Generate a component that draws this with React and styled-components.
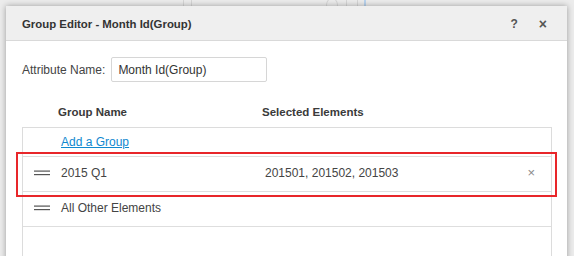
import React from 'react';
import styled, { createGlobalStyle } from 'styled-components';

const GlobalStyle = createGlobalStyle`
  html, body {
    margin: 0;
    padding: 0;
    background: #ececec;
    font-family: "Liberation Sans", Arial, sans-serif;
    font-size: 12px;
    color: #333;
  }
`;

const Screen = styled.div`
  position: relative;
  width: 574px;
  height: 256px;
  overflow: hidden;
  background: #ececec;
`;

const PageBehind = styled.div`
  display: flex;
  align-items: flex-end;
  height: 6px;
  padding-left: 183px;
`;

const FaintBox = styled.div`
  flex-shrink: 0;
  width: ${(p) => p.w}px;
  height: 12px;
  margin-left: ${(p) => p.ml || 0}px;
  border: 1px solid ${(p) => p.color || '#d6d6d6'};
  border-radius: ${(p) => (p.round ? '50%' : '0')};
  margin-bottom: -6px;
`;

const Dialog = styled.div`
  position: absolute;
  top: 6px;
  left: 6px;
  width: 561px;
  height: 270px;
  background: #fff;
  box-shadow: 0 0 6px rgba(0, 0, 0, 0.35);
`;

const Header = styled.div`
  display: flex;
  align-items: center;
  box-sizing: border-box;
  height: 35px;
  padding: 1px 20px 0 16px;
  background: #efefef;
  border-bottom: 1px solid #d9d9d9;
`;

const Title = styled.div`
  flex: 1;
  font-weight: bold;
  font-size: 11.4px;
  color: #333;
`;

const HeaderButton = styled.span`
  font-weight: bold;
  font-size: ${(p) => p.size || 12}px;
  color: #555;
  margin-left: ${(p) => p.gap || 0}px;
  line-height: 1;
`;

const Body = styled.div`
  padding: 16px 15px 0 16px;
`;

const FieldRow = styled.div`
  display: flex;
  align-items: center;
  gap: 6px;
`;

const Label = styled.label`
  color: #444;
`;

const TextInput = styled.div`
  box-sizing: border-box;
  width: 156px;
  height: 25px;
  border: 1px solid #d6d6d6;
  border-radius: 2px;
  padding: 0 6px;
  display: flex;
  align-items: center;
  font-size: 12px;
  color: #333;
`;

const ColumnHeads = styled.div`
  display: flex;
  height: 45px;
  align-items: center;
  padding-top: 14px;
  box-sizing: border-box;
  font-weight: bold;
  font-size: 11.5px;
  color: #3a3a3a;
`;

const Col = styled.div`
  box-sizing: border-box;
  width: ${(p) => p.w}px;
  padding-left: ${(p) => p.pl || 0}px;
`;

const List = styled.div`
  border: 1px solid #dcdcdc;
  height: 200px;
`;

const AddRow = styled.div`
  height: 28px;
  display: flex;
  align-items: center;
  padding-left: 38px;
`;

const Link = styled.a`
  color: #1088cf;
  text-decoration: underline;
  cursor: pointer;
`;

const Row = styled.div`
  position: relative;
  box-sizing: border-box;
  display: flex;
  align-items: center;
  height: ${(p) => p.h}px;
  padding-bottom: 3px;
  border-top: ${(p) => (p.top ? '1px solid #dedede' : 'none')};
  border-bottom: 1px solid #dedede;
  color: #444;
  ${(p) =>
    p.highlight &&
    `
    &::after {
      content: '';
      position: absolute;
      top: -5px;
      left: -7px;
      right: -6px;
      bottom: -6px;
      border: 2px solid #e8262a;
      pointer-events: none;
    }
  `}
`;

const Handle = styled.div`
  width: 16px;
  margin-left: 11px;
  margin-right: 11px;
  display: flex;
`;

const Cell = styled.div`
  width: ${(p) => p.w}px;
`;

const Remove = styled.span`
  color: #8a8a8a;
  font-size: 13px;
  margin-left: auto;
  margin-right: 16px;
`;

const HandleIcon = () => (
  <svg width="16" height="6" viewBox="0 0 16 6">
    <rect x="0" y="0.5" width="16" height="1.2" fill="#555" />
    <rect x="0" y="4" width="16" height="1.2" fill="#555" />
  </svg>
);

export default function App() {
  return (
    <>
      <GlobalStyle />
      <Screen>
        <PageBehind>
          <FaintBox w={7} />
          <FaintBox w={10} ml={134} round />
          <FaintBox w={10} ml={8} />
          <FaintBox w={0} ml={6} color="#b9d3ee" />
        </PageBehind>
        <Dialog>
          <Header>
            <Title>Group Editor - Month Id(Group)</Title>
            <HeaderButton size={12}>?</HeaderButton>
            <HeaderButton size={14} gap={21}>×</HeaderButton>
          </Header>
          <Body>
            <FieldRow>
              <Label>Attribute Name:</Label>
              <TextInput>Month Id(Group)</TextInput>
            </FieldRow>
            <ColumnHeads>
              <Col w={240} pl={36}>Group Name</Col>
              <Col w={200}>Selected Elements</Col>
            </ColumnHeads>
            <List>
              <AddRow>
                <Link>Add a Group</Link>
              </AddRow>
              <Row h={36} top highlight>
                <Handle>
                  <HandleIcon />
                </Handle>
                <Cell w={204}>2015 Q1</Cell>
                <Cell w={200}>201501, 201502, 201503</Cell>
                <Remove>×</Remove>
              </Row>
              <Row h={35}>
                <Handle>
                  <HandleIcon />
                </Handle>
                <Cell w={240}>All Other Elements</Cell>
              </Row>
            </List>
          </Body>
        </Dialog>
      </Screen>
    </>
  );
}
